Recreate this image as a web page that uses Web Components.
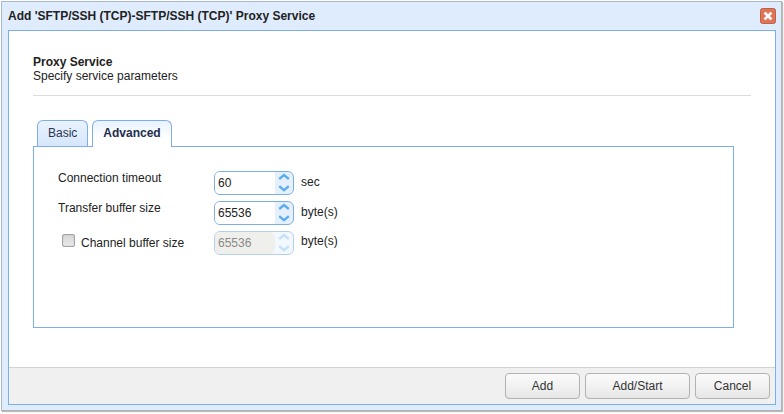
<!DOCTYPE html>
<html>
<head>
<meta charset="utf-8">
<style>
  html, body { margin: 0; padding: 0; background: #fff; }
  body { width: 784px; height: 414px; overflow: hidden; font: 12px "Liberation Sans", Arial, sans-serif; color: #222; }
</style>
</head>
<body>
<proxy-dialog heading="Add 'SFTP/SSH (TCP)-SFTP/SSH (TCP)' Proxy Service">
  <wizard-header heading="Proxy Service" sub="Specify service parameters"></wizard-header>
  <tab-strip>
    <tab-item>Basic</tab-item>
    <tab-item active>Advanced</tab-item>
  </tab-strip>
  <tab-panel>
    <field-row label="Connection timeout" value="60" unit="sec"></field-row>
    <field-row label="Transfer buffer size" value="65536" unit="byte(s)"></field-row>
    <field-row label="Channel buffer size" value="65536" unit="byte(s)" checkable disabled></field-row>
  </tab-panel>
  <dlg-button slot="footer" style="width:75px">Add</dlg-button>
  <dlg-button slot="footer" style="width:105px">Add/Start</dlg-button>
  <dlg-button slot="footer" style="width:75px">Cancel</dlg-button>
</proxy-dialog>

<script>
// ---- Dialog shell ----
class ProxyDialog extends HTMLElement {
  constructor() {
    super();
    this.attachShadow({ mode: 'open' });
    this.shadowRoot.innerHTML = `
<style>
  :host {
    display: block;
    box-sizing: border-box;
    width: 781px;
    height: 410px;
    margin: 1px 0 0 1px;
    border: 1px solid #a9b8c9;
    border-right-color: #b4b4b4;
    border-bottom-color: #b0b0b0;
    background: #dfecfd;
    box-shadow: 1px 1px 1px #bbb;
  }
  .window { display: flex; flex-direction: column; height: 100%; padding: 0 5px 5px 6px; box-sizing: border-box; }
  .title {
    height: 28px;
    flex: none;
    display: flex;
    align-items: center;
    justify-content: space-between;
    box-sizing: border-box;
    font-weight: bold;
    font-size: 12px;
    color: #222;
  }
  .close { display: block; margin-bottom: 0; }
  .inner {
    flex: 1;
    display: flex;
    flex-direction: column;
    border: 1px solid #7eaee8;
    background: #fff;
    min-height: 0;
  }
  .content { flex: 1; padding: 24px 24px 0 24px; min-height: 0; }
  .footer {
    flex: none;
    height: 37px;
    box-sizing: border-box;
    border-top: 1px solid #d2d2d2;
    background: #f0f0f0;
    display: flex;
    justify-content: flex-end;
    align-items: flex-start;
    gap: 5px;
    padding: 5px 5px 0 0;
  }
</style>
<div class="window">
  <div class="title">
    <span id="heading"></span>
    <svg class="close" width="16" height="16" viewBox="0 0 16 16">
      <rect x="0.5" y="0.5" width="15" height="15" rx="2" fill="#e57355" stroke="#b0664c"/>
      <path d="M5.500 5.500 L10.500 10.500 M10.500 5.500 L5.500 10.500" stroke="#fff" stroke-width="2.600" stroke-linecap="square"/>
    </svg>
  </div>
  <div class="inner">
    <div class="content"><slot></slot></div>
    <div class="footer"><slot name="footer"></slot></div>
  </div>
</div>`;
  }
  connectedCallback() {
    this.shadowRoot.getElementById('heading').textContent = this.getAttribute('heading');
  }
}
customElements.define('proxy-dialog', ProxyDialog);

// ---- Title block above the tabs ----
class WizardHeader extends HTMLElement {
  constructor() {
    super();
    this.attachShadow({ mode: 'open' });
    this.shadowRoot.innerHTML = `
<style>
  :host { display: block; height: 40px; border-bottom: 1px solid #dcdcdc; line-height: 14px; color: #222; }
  b { display: block; }
</style>
<b id="h"></b><span id="s"></span>`;
  }
  connectedCallback() {
    this.shadowRoot.getElementById('h').textContent = this.getAttribute('heading');
    this.shadowRoot.getElementById('s').textContent = this.getAttribute('sub');
  }
}
customElements.define('wizard-header', WizardHeader);

// ---- Tabs ----
class TabStrip extends HTMLElement {
  constructor() {
    super();
    this.attachShadow({ mode: 'open' });
    this.shadowRoot.innerHTML = `
<style>
  :host { display: flex; gap: 4px; align-items: flex-start; height: 26px; margin-top: 24px; padding-left: 4px; position: relative; z-index: 1; }
</style>
<slot></slot>`;
  }
}
customElements.define('tab-strip', TabStrip);

class TabItem extends HTMLElement {
  constructor() {
    super();
    this.attachShadow({ mode: 'open' });
    this.shadowRoot.innerHTML = `
<style>
  :host {
    display: block;
    box-sizing: border-box;
    height: 26px;
    padding: 0 10px;
    line-height: 25px;
    border: 1px solid #7eaee8;
    border-bottom: 0;
    border-radius: 6px 6px 0 0;
    background: linear-gradient(#eaf3fe, #d5e6fc);
    color: #2a3550;
  }
  :host([active]) {
    height: 27px;
    border-bottom: 0;
    font-weight: bold;
    color: #1f2d4d;
    background: linear-gradient(#e9f2fe, #fff 70%);
  }
</style>
<slot></slot>`;
  }
}
customElements.define('tab-item', TabItem);

class TabPanel extends HTMLElement {
  constructor() {
    super();
    this.attachShadow({ mode: 'open' });
    this.shadowRoot.innerHTML = `
<style>
  :host {
    display: flex;
    flex-direction: column;
    gap: 6px;
    box-sizing: border-box;
    width: 701px;
    height: 182px;
    border: 1px solid #7eaee8;
    padding: 24px 0 0 24px;
  }
</style>
<slot></slot>`;
  }
}
customElements.define('tab-panel', TabPanel);

// ---- Label + spinner + unit ----
class FieldRow extends HTMLElement {
  constructor() {
    super();
    this.attachShadow({ mode: 'open' });
    this.shadowRoot.innerHTML = `
<style>
  :host { display: grid; grid-template-columns: 149px 80px auto; column-gap: 7px; height: 24px; align-items: center; color: #222; }
  .label { display: flex; align-items: center; margin-top: -10px; }
  :host([checkable]) .label { margin-top: 0; margin-left: 4px; }
  .check {
    width: 11px; height: 11px;
    margin-right: 6px;
    margin-top: -6px;
    border: 1px solid #a3a3a3;
    border-radius: 2px;
    background: linear-gradient(#d6d6d6, #e9e9e9);
    box-shadow: inset 0 0 1px #999;
  }
  .spin {
    box-sizing: border-box;
    height: 24px;
    border: 1px solid #7eaee8;
    border-radius: 6px;
    display: flex;
    overflow: hidden;
    background: #e6f0fd;
  }
  .val { flex: 1; padding: 1px 0 0 3px; line-height: 21px; font-size: 12px; color: #222; background: #fff; }
  .btns { flex: none; width: 18px; display: flex; flex-direction: column; align-items: center; gap: 4px; padding-top: 1px; }
  .btns svg { display: block; }
  :host([disabled]) .spin { border-color: #b5cfee; background: #f3f8fe; }
  :host([disabled]) .val { background: #efefeb; color: #8a8a8a; border-radius: 0 6px 6px 0; }
  :host([disabled]) .btns path { stroke: #c2e1fa; }
  .unit { margin-top: -3px; }
  :host([checkable]) .unit { margin-top: -4px; }
</style>
<div class="label"><span class="check" id="chk"></span><span id="lbl"></span></div>
<div class="spin">
  <div class="val" id="val"></div>
  <div class="btns">
    <svg width="12" height="8" viewBox="0 0 12 8"><path d="M1.200 6 L6 2 L10.800 6" fill="none" stroke="#59aef0" stroke-width="2.400"/></svg>
    <svg width="12" height="8" viewBox="0 0 12 8"><path d="M1.200 1.200 L6 5.200 L10.800 1.200" fill="none" stroke="#59aef0" stroke-width="2.400"/></svg>
  </div>
</div>
<div class="unit" id="unit"></div>`;
  }
  connectedCallback() {
    const root = this.shadowRoot;
    root.getElementById('lbl').textContent = this.getAttribute('label');
    root.getElementById('val').textContent = this.getAttribute('value');
    root.getElementById('unit').textContent = this.getAttribute('unit');
    if (!this.hasAttribute('checkable')) root.getElementById('chk').remove();
  }
}
customElements.define('field-row', FieldRow);

// ---- Footer button ----
class DlgButton extends HTMLElement {
  constructor() {
    super();
    this.attachShadow({ mode: 'open' });
    this.shadowRoot.innerHTML = `
<style>
  :host {
    display: block;
    box-sizing: border-box;
    height: 26px;
    border: 1px solid #b2b2b2;
    border-radius: 4px;
    background: linear-gradient(#fafafa, #f2f2f2 50%, #e6e6e6);
    text-align: center;
    line-height: 24px;
    color: #333;
  }
</style>
<slot></slot>`;
  }
}
customElements.define('dlg-button', DlgButton);
</script>
</body>
</html>
